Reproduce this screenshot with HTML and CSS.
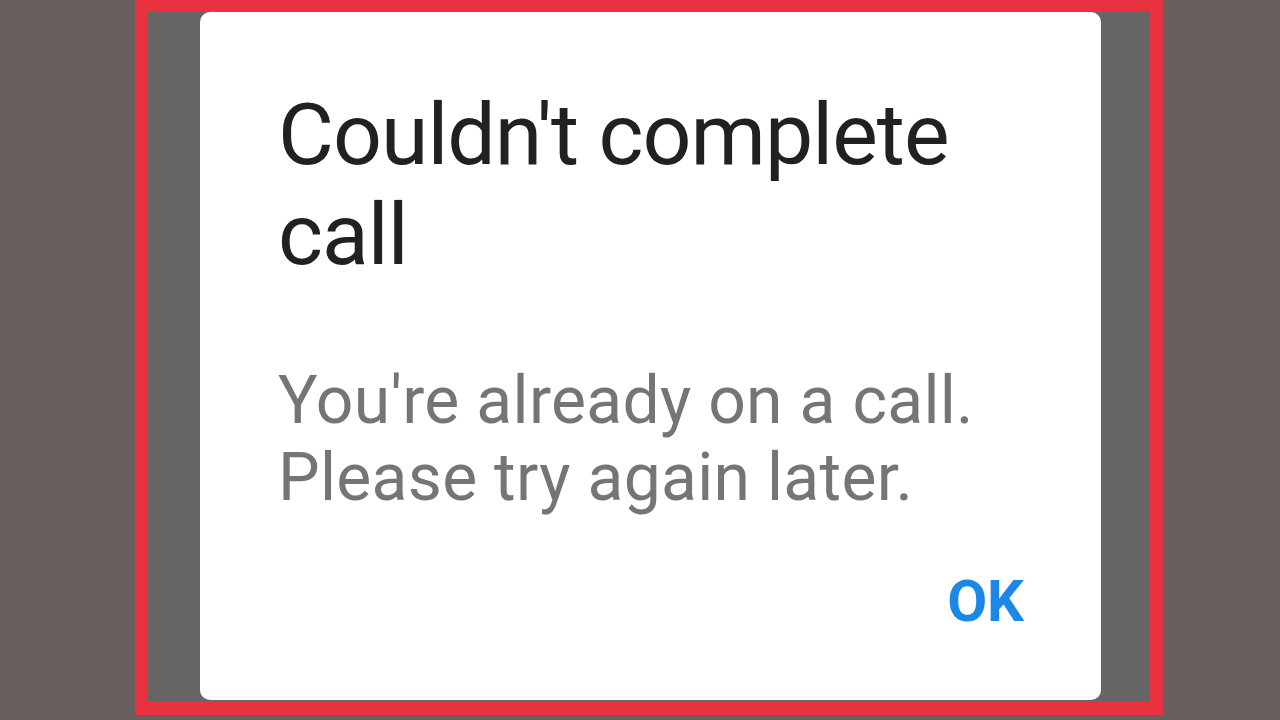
FILE: index.html
```html
<!DOCTYPE html>
<html>
<head>
  <title>Couldn't complete call</title>
  <link rel="stylesheet" href="styles.css">
</head>
<body>
  <div class="frame">
    <div class="dialog">
      <h1 class="dialog-title">Couldn't complete call</h1>
      <p class="dialog-message">You're already on a call. Please try again later.</p>
      <div class="dialog-actions">
        <button class="btn-ok">OK</button>
      </div>
    </div>
  </div>
</body>
</html>
```
FILE: styles.css
```css
html, body {
  margin: 0;
  height: 100%;
}
body {
  font-family: Roboto, "Noto Sans", sans-serif;
  background-color: #685e5b;
  overflow: hidden;
}
.frame {
  --frame-red: #e8323f;
  --scrim: #656565;

  box-sizing: border-box;
  width: 1028px;
  height: 715px;
  margin-left: 135px;
  border: 13px solid var(--frame-red);
  border-top-width: 12px;
  border-bottom-width: 14px;
  background-color: var(--scrim);
}
.dialog {
  box-sizing: border-box;
  width: 901px;
  height: 688px;
  margin-left: 52px;
  padding: 73px 77px 0 78px;
  background-color: #fff;
  border-radius: 10px;
}
.dialog-title {
  margin: 0;
  width: 720px;
  font-size: 86px;
  font-weight: 400;
  letter-spacing: -1px;
  line-height: 100px;
  color: #212121;
}
.dialog-message {
  margin: 77px 0 0 0;
  width: 720px;
  font-size: 66px;
  letter-spacing: 0.3px;
  line-height: 77px;
  color: #757575;
}
.dialog-actions {
  display: flex;
  justify-content: flex-end;
  margin-top: 56px;
}
.btn-ok {
  padding: 0;
  border: none;
  background: none;
  font-family: inherit;
  font-size: 58px;
  font-weight: 700;
  line-height: 58px;
  color: #1b87e9;
}
```
